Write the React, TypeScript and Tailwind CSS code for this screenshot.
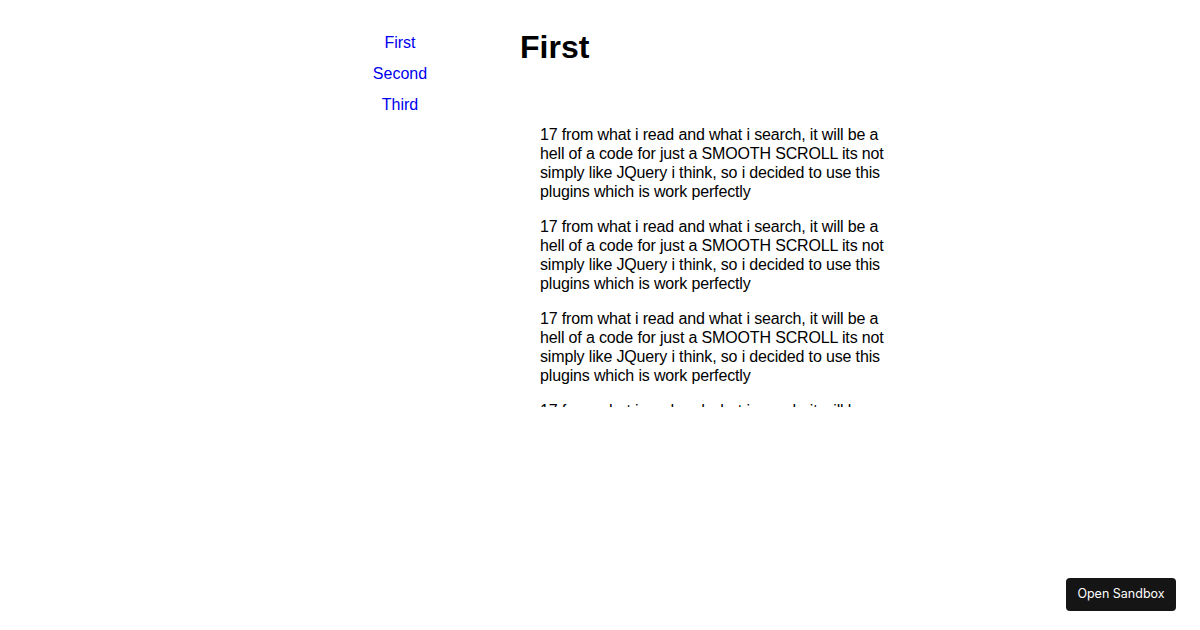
import React from "react";

const TEXT =
  "17 from what i read and what i search, it will be a hell of a code for just a SMOOTH SCROLL its not simply like JQuery i think, so i decided to use this plugins which is work perfectly";

export default function App() {
  return (
    <div
      className="relative w-[1200px] h-[630px] bg-white pt-[8px] text-black overflow-hidden"
      style={{ fontFamily: '"Liberation Sans", Arial, sans-serif' }}
    >
      <div className="pl-[300px] flex">
        <nav className="w-[200px] shrink-0 pt-[19px] flex flex-col items-center text-[16px]">
          {["First", "Second", "Third"].map((l) => (
            <a key={l} href="#" className="block py-[6px] leading-[19px] text-[#0000ee]">
              {l}
            </a>
          ))}
        </nav>
        <main className="shrink-0 ml-[20px] pt-[21px]">
          <h1 className="text-[32px] font-bold leading-[37px]">First</h1>
          <div className="mt-[39px] w-[390px] h-[302px] p-[20px] overflow-hidden">
            <div className="w-[350px] flex flex-col gap-[16px] text-[16px] leading-[19px] tracking-[-0.15px]">
              {[0, 1, 2, 3, 4, 5].map((i) => (
                <p key={i}>{TEXT}</p>
              ))}
            </div>
          </div>
        </main>
      </div>
      <button
        className="absolute right-[24px] bottom-[19px] w-[110px] h-[33px] rounded-[4px] bg-[#151515] text-white text-[12.5px]"
        style={{ fontFamily: 'Inter, "Liberation Sans", sans-serif' }}
      >
        Open Sandbox
      </button>
    </div>
  );
}
